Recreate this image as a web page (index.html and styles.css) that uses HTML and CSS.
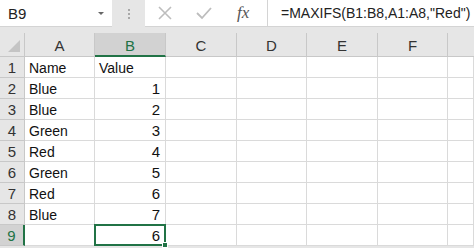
FILE: index.html
```html
<!DOCTYPE html>
<html>
<head>
<meta charset="utf-8">
<link rel="stylesheet" href="styles.css">
</head>
<body>
<div class="app">
  <div class="fbar">
    <div class="namebox"><span class="ref">B9</span><span class="dd"></span></div>
    <div class="grip"><span></span><span></span><span></span></div>
    <div class="fbtns">
      <svg class="ico" width="16" height="16" viewBox="0 0 16 16"><path d="M2 2 L14 14 M14 2 L2 14" stroke="#bdbdbd" stroke-width="1.6" fill="none"/></svg>
      <svg class="ico" width="18" height="16" viewBox="0 0 18 16"><path d="M2 8 L7 13 L16 3" stroke="#bdbdbd" stroke-width="1.8" fill="none"/></svg>
      <span class="fx">fx</span>
    </div>
    <div class="finput">=MAXIFS(B1:B8,A1:A8,"Red")</div>
  </div>
  <div class="sheet">
    <div class="corner"><span class="tri"></span></div>
    <div class="ch">A</div><div class="ch sel">B</div><div class="ch">C</div><div class="ch">D</div><div class="ch">E</div><div class="ch">F</div><div class="ch last"></div>

    <div class="rh">1</div><div class="c">Name</div><div class="c">Value</div><div class="c"></div><div class="c"></div><div class="c"></div><div class="c"></div><div class="c"></div>
    <div class="rh">2</div><div class="c">Blue</div><div class="c n">1</div><div class="c"></div><div class="c"></div><div class="c"></div><div class="c"></div><div class="c"></div>
    <div class="rh">3</div><div class="c">Blue</div><div class="c n">2</div><div class="c"></div><div class="c"></div><div class="c"></div><div class="c"></div><div class="c"></div>
    <div class="rh">4</div><div class="c">Green</div><div class="c n">3</div><div class="c"></div><div class="c"></div><div class="c"></div><div class="c"></div><div class="c"></div>
    <div class="rh">5</div><div class="c">Red</div><div class="c n">4</div><div class="c"></div><div class="c"></div><div class="c"></div><div class="c"></div><div class="c"></div>
    <div class="rh">6</div><div class="c">Green</div><div class="c n">5</div><div class="c"></div><div class="c"></div><div class="c"></div><div class="c"></div><div class="c"></div>
    <div class="rh">7</div><div class="c">Red</div><div class="c n">6</div><div class="c"></div><div class="c"></div><div class="c"></div><div class="c"></div><div class="c"></div>
    <div class="rh">8</div><div class="c">Blue</div><div class="c n">7</div><div class="c"></div><div class="c"></div><div class="c"></div><div class="c"></div><div class="c"></div>
    <div class="rh sel">9</div><div class="c"></div><div class="c n active">6<span class="handle"></span></div><div class="c"></div><div class="c"></div><div class="c"></div><div class="c"></div><div class="c"></div>
  </div>
</div>
</body>
</html>
```
FILE: styles.css
```css
* { box-sizing: border-box; }
html, body { margin: 0; padding: 0; }
body {
  width: 474px;
  height: 248px;
  overflow: hidden;
  background: #e6e6e6;
  font-family: "Liberation Sans", Arial, sans-serif;
  color: #000;
}
.app { display: flex; flex-direction: column; }
.fbar {
  display: flex;
  height: 27px;
  background: #e6e6e6;
  margin-bottom: 6px;
}
.namebox {
  width: 112px;
  background: #fff;
  display: flex;
  align-items: center;
  justify-content: space-between;
  padding: 0 8px 0 8px;
  font-size: 15px;
  color: #222;
  border-bottom: 1px solid #d4d4d4;
}
.dd {
  width: 0; height: 0;
  border-left: 3px solid transparent;
  border-right: 3px solid transparent;
  border-top: 3px solid #666;
}
.grip {
  width: 33px;
  display: flex;
  flex-direction: column;
  align-items: center;
  justify-content: center;
  gap: 2px;
}
.grip span { width: 2px; height: 2px; background: #a8a8a8; }
.fbtns {
  width: 123px;
  background: #fff;
  display: flex;
  align-items: center;
  padding-left: 12px;
  gap: 22px;
  border-right: 1px solid #d4d4d4;
  border-bottom: 1px solid #d4d4d4;
}
.fx {
  font-family: "Liberation Serif", "Times New Roman", serif;
  font-style: italic;
  font-size: 17px;
  color: #555;
  margin-left: 2px;
}
.finput {
  flex: 1;
  background: #fff;
  display: flex;
  align-items: center;
  padding-left: 13px;
  font-size: 14px;
  color: #222;
  border-bottom: 1px solid #d4d4d4;
  white-space: nowrap;
}
.sheet {
  display: grid;
  grid-template-columns: 25px 70px 71px 71px 70px 71px 70px 26px;
  grid-template-rows: 24px repeat(9, 21px);
  background: #fff;
}
.corner {
  background: #e6e6e6;
  border-right: 1px solid #c8c8c8;
  border-bottom: 1px solid #c8c8c8;
  position: relative;
}
.tri {
  position: absolute;
  right: 4px; bottom: 4px;
  width: 0; height: 0;
  border-left: 12px solid transparent;
  border-bottom: 12px solid #c4c4c4;
}
.ch {
  background: #e6e6e6;
  border-right: 1px solid #c8c8c8;
  border-bottom: 1px solid #c8c8c8;
  display: flex;
  align-items: center;
  justify-content: center;
  font-size: 15px;
  color: #333;
  padding-top: 1px;
}
.ch.sel {
  background: #d2d2d2;
  color: #217346;
  border-bottom: 2px solid #217346;
  padding-top: 2px;
}
.ch.last { border-right: none; }
.rh {
  background: #e6e6e6;
  border-right: 1px solid #c8c8c8;
  border-bottom: 1px solid #c8c8c8;
  display: flex;
  align-items: center;
  justify-content: center;
  font-size: 15px;
  color: #333;
}
.rh.sel {
  background: #d2d2d2;
  color: #217346;
  border-right: 2px solid #217346;
}
.c {
  border-right: 1px solid #dadada;
  border-bottom: 1px solid #dadada;
  display: flex;
  align-items: center;
  padding: 1px 4px 0 4px;
  font-size: 14px;
  color: #111;
  white-space: nowrap;
}
.c.n { justify-content: flex-end; padding-right: 5px; font-size: 15px; }
.c.active {
  position: relative;
  border: 2px solid #217346;
  margin: -1px 0 0 -1px;
  padding-right: 4px;
}
.handle {
  position: absolute;
  right: -4px; bottom: -4px;
  width: 6px; height: 6px;
  background: #217346;
  border: 1px solid #fff;
}
```
